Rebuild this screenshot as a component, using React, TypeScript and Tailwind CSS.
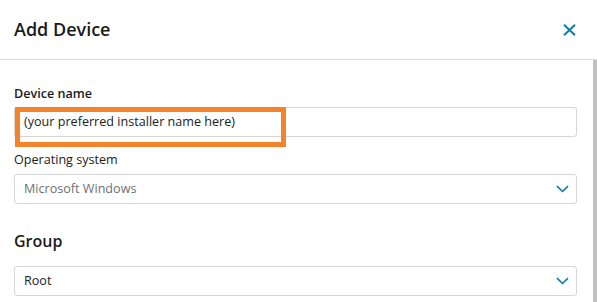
import React from "react";

const font = { fontFamily: '"Open Sans", "Noto Sans", sans-serif' };

function Chevron() {
  return (
    <svg width="13" height="8" viewBox="0 0 13 8" fill="none" className="text-[#1277a8]">
      <path d="M1 1.2 L6.5 6.5 L12 1.2" stroke="currentColor" strokeWidth="1.6" />
    </svg>
  );
}

function SelectBox({ value, muted }: { value: string; muted?: boolean }) {
  return (
    <div className="flex h-[30px] items-center justify-between rounded-[3px] border border-[#d6d6d6] bg-white pl-[9px] pr-[7px]">
      <span className={`text-[12.6px] leading-none ${muted ? "text-[#6f6f6f]" : "text-[#222]"}`}>{value}</span>
      <Chevron />
    </div>
  );
}

export default function App() {
  return (
    <div className="flex h-[302px] w-[597px] flex-col overflow-hidden bg-white text-[#1b1b1b]" style={font}>
      <div className="flex h-[60px] shrink-0 items-center justify-between border-b border-[#d9d9d9] pl-[14px] pr-[21px]">
        <h1 className="text-[18px] font-semibold leading-none pb-[1px]">Add Device</h1>
        <button type="button" className="text-[#0e7bab]">
          <svg width="13" height="12" viewBox="0 0 13 12" fill="none">
            <path d="M1 0.8 L12 11.2 M12 0.8 L1 11.2" stroke="currentColor" strokeWidth="2" />
          </svg>
        </button>
      </div>

      <div className="flex flex-1">
        <div className="flex-1 pl-[14px] pr-[16px] pt-[25px]">
          <label className="block text-[12.6px] font-semibold leading-[18px]">Device name</label>
          <div className="relative mt-1">
            <div className="flex h-[30px] items-center rounded-[3px] border border-[#d6d6d6] bg-white pl-[9px]">
              <span className="text-[12.6px] leading-none text-[#222]">(your preferred installer name here)</span>
            </div>
            <div className="absolute left-[1px] top-0 h-[40px] w-[271px] border-[5px] border-[#f5832b]" />
          </div>

          <label className="mt-[14px] block text-[12.6px] leading-[18px]">Operating system</label>
          <div className="mt-[5px]">
            <SelectBox value="Microsoft Windows" muted />
          </div>

          <h2 className="mt-[26px] text-[16px] font-semibold leading-[22px]">Group</h2>
          <div className="mt-[14px]">
            <SelectBox value="Root" />
          </div>
        </div>
        <div className="w-[4px] shrink-0 bg-[#c1c1c1]" />
      </div>
    </div>
  );
}
